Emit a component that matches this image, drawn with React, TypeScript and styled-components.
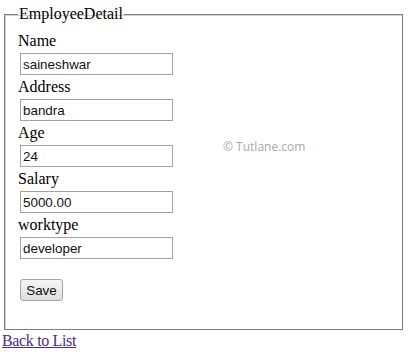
import React from 'react';
import styled, { createGlobalStyle } from 'styled-components';

const GlobalStyle = createGlobalStyle`
  html, body {
    margin: 0;
    padding: 0;
    background: #fff;
  }
  body {
    font-family: "Liberation Serif", "Times New Roman", serif;
    font-size: 16px;
    color: #000;
  }
`;

const Page = styled.div`
  padding: 5px 0 0 2px;
`;

const FieldSet = styled.fieldset`
  position: relative;
  box-sizing: border-box;
  width: 399px;
  margin: 0 0 1px 2px;
  padding: 8px 13px 0 13px;
  border: 1px solid #7d7d7d;
  box-shadow: inset 1px 1px 0 #d2d2d2;
  min-width: 0;
`;

const Legend = styled.legend`
  padding: 0 1px;
  font-size: 16px;
  line-height: 18px;
`;

const Label = styled.label`
  display: block;
  font-size: 16px;
  line-height: 20px;
`;

const TextInput = styled.input`
  display: block;
  box-sizing: border-box;
  width: 153px;
  height: 22px;
  margin: 2px 0 2px 2px;
  padding: 0 2px;
  border: 1px solid #a3a3a3;
  font-family: "Liberation Sans", Arial, sans-serif;
  font-size: 13.4px;
  color: #111;
  background: #fff;
  outline: none;
`;

const ButtonRow = styled.div`
  padding: 18px 0 28px 2px;
`;

const SaveButton = styled.button`
  display: block;
  box-sizing: border-box;
  width: 43px;
  height: 22px;
  padding: 0;
  border: 1px solid #a6a6a6;
  border-radius: 3px;
  background: linear-gradient(#f6f6f6, #dedede);
  font-family: "Liberation Sans", Arial, sans-serif;
  font-size: 13.4px;
  color: #111;
`;

const Watermark = styled.span`
  position: absolute;
  left: 218px;
  top: 117px;
  font-family: "Open Sans", "Liberation Sans", sans-serif;
  font-size: 12px;
  line-height: 14px;
  color: #a8a8a8;
`;

const BackLink = styled.a`
  display: inline-block;
  font-size: 16px;
  line-height: 20px;
  letter-spacing: -0.35px;
  color: #4b2c84;
  text-decoration: underline;
`;

const fields = [
  { name: 'Name', value: 'saineshwar' },
  { name: 'Address', value: 'bandra' },
  { name: 'Age', value: '24' },
  { name: 'Salary', value: '5000.00' },
  { name: 'worktype', value: 'developer' },
];

export default function App() {
  return (
    <Page>
      <GlobalStyle />
      <FieldSet>
        <Legend>EmployeeDetail</Legend>
        {fields.map((f) => (
          <div key={f.name}>
            <Label htmlFor={f.name}>{f.name}</Label>
            <TextInput id={f.name} defaultValue={f.value} />
          </div>
        ))}
        <ButtonRow>
          <SaveButton type="button">Save</SaveButton>
        </ButtonRow>
        <Watermark>© Tutlane.com</Watermark>
      </FieldSet>
      <BackLink href="#">Back to List</BackLink>
    </Page>
  );
}
